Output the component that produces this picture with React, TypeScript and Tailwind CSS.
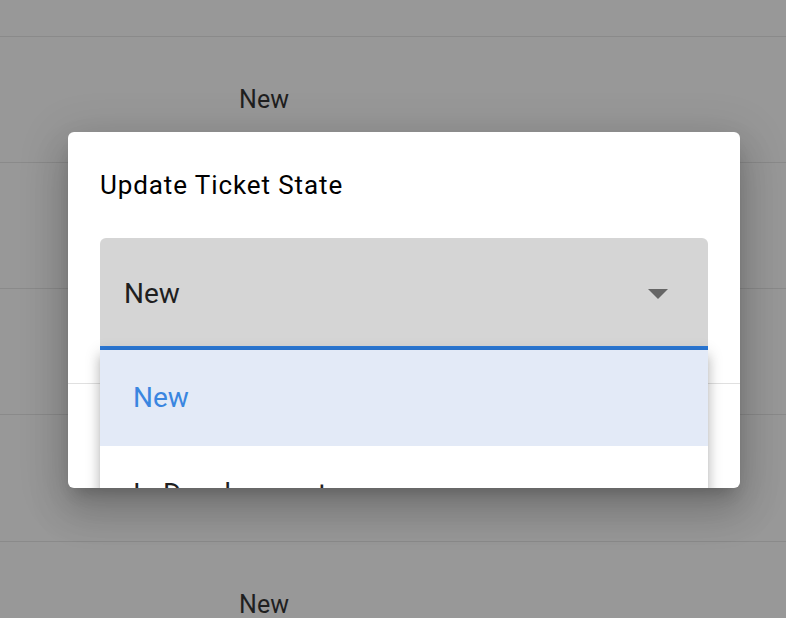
import React from 'react';

const ROWS = [
  { h: 'h-[37px]', label: '' },
  { h: 'h-[126px]', label: 'New' },
  { h: 'h-[126px]', label: 'New' },
  { h: 'h-[126px]', label: 'New' },
  { h: 'h-[127px]', label: 'New' },
  { h: 'h-[126px]', label: 'New' },
];

const OPTIONS = ['New', 'In Development', 'Done'];

function CaretDown() {
  return (
    <svg width="20" height="10" viewBox="0 0 20 10" className="shrink-0">
      <path d="M0 0h20L10 10z" fill="#666666" />
    </svg>
  );
}

export default function App() {
  return (
    <div
      className="relative h-[618px] w-[786px] overflow-hidden bg-[#989898] text-[#1f1f1f]"
      style={{ fontFamily: 'Roboto, "Noto Sans", sans-serif' }}
    >
      {/* table under the scrim */}
      <div className="flex flex-col">
        {ROWS.map((r, i) => (
          <div key={i} className={`${r.h} flex items-center border-b border-[#8a8a8a] shrink-0`}>
            <div className="w-[528px] text-center text-[25px] leading-none">{r.label}</div>
          </div>
        ))}
      </div>

      {/* dialog */}
      <div className="absolute left-[68px] top-[132px] h-[356px] w-[672px] overflow-hidden rounded-[6px] bg-white shadow-[0_11px_15px_-7px_rgba(0,0,0,0.2),0_24px_38px_3px_rgba(0,0,0,0.14),0_9px_46px_8px_rgba(0,0,0,0.12)]">
        <div className="px-8 pt-[37px] text-[26px] leading-[32px] tracking-[0.9px] text-black">Update Ticket State</div>

        <div className="mx-8 mt-[37px] flex h-[112px] items-center justify-between rounded-t-[6px] border-b-4 border-[#2b78d6] bg-[#d5d5d5] pl-6 pr-10 pt-1">
          <span className="text-[28px] leading-none text-[#1f1f1f]">New</span>
          <CaretDown />
        </div>

        <div className="mt-[33px] border-t border-[#e0e0e0]" />

        {/* open menu */}
        <div className="absolute left-8 top-[218px] w-[608px] bg-white shadow-[0_5px_5px_-3px_rgba(0,0,0,0.2),0_8px_10px_1px_rgba(0,0,0,0.14),0_3px_14px_2px_rgba(0,0,0,0.12)]">
          {OPTIONS.map((o, i) => (
            <div
              key={o}
              className={
                i === 0
                  ? 'flex h-[96px] items-center bg-[#e3eaf7] pl-[33px] text-[28px] leading-none text-[#3a86e0]'
                  : 'flex h-[96px] items-center pl-[33px] text-[28px] leading-none text-[#1f1f1f]'
              }
            >
              {o}
            </div>
          ))}
        </div>
      </div>
    </div>
  );
}
